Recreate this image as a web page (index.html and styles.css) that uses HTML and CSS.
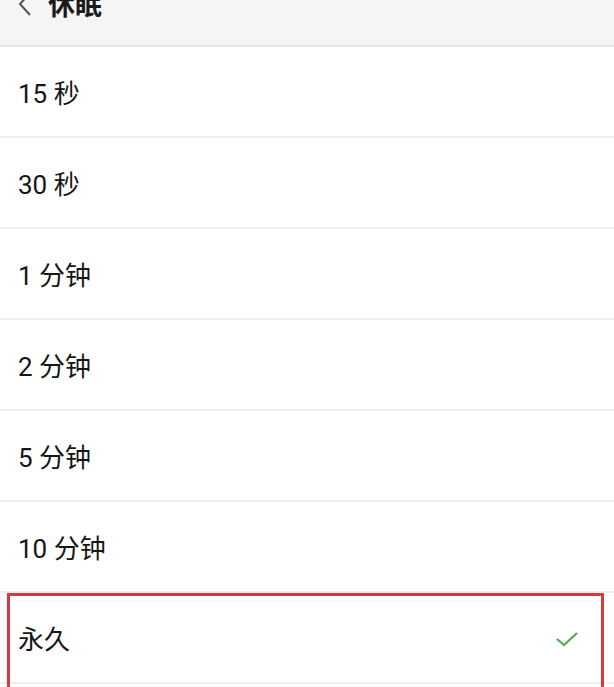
FILE: index.html
```html
<!DOCTYPE html>
<html lang="zh-CN">
<head>
    <meta charset="UTF-8">
    <meta name="viewport" content="width=device-width, initial-scale=1.0">
    <title>休眠</title>
    <link rel="stylesheet" href="styles.css">
</head>
<body>
    <div class="topbar">
        <svg class="back-icon" width="14" height="26" viewBox="0 0 14 26">
            <polyline points="12,2 2,13 12,24" fill="none" stroke="#555" stroke-width="2"/>
        </svg>
        <span class="topbar-title">休眠</span>
    </div>

    <ul class="option-list">
        <li class="option">15 秒</li>
        <li class="option">30 秒</li>
        <li class="option">1 分钟</li>
        <li class="option">2 分钟</li>
        <li class="option">5 分钟</li>
        <li class="option">10 分钟</li>
        <li class="option selected">
            永久
            <svg class="check" width="22" height="16" viewBox="0 0 22 16">
                <polyline points="1,8 8,14 21,2" fill="none" stroke="#4caf50" stroke-width="2.2"/>
            </svg>
            <div class="highlight"></div>
        </li>
        <li class="option">&nbsp;</li>
    </ul>
</body>
</html>
```

FILE: styles.css
```css
:root {
    --color-bg: #ffffff;
    --color-bar: #f5f5f5;
    --color-border: #efefef;
    --color-text: #161616;
    --color-mark: #d63a3e;
}

* {
    margin: 0;
    padding: 0;
    box-sizing: border-box;
}

html, body {
    height: 100%;
    overflow: hidden;
}

body {
    font-family: Roboto, "Noto Sans CJK SC", sans-serif;
    background: var(--color-bg);
    color: var(--color-text);
}

.topbar {
    height: 47px;
    background: var(--color-bar);
    border-bottom: 2px solid #e8e8e8;
    display: flex;
    align-items: flex-start;
    padding-left: 18px;
    gap: 16px;
    overflow: hidden;
}

.back-icon {
    margin-top: -9px;
}

.topbar-title {
    font-size: 27px;
    font-weight: 700;
    line-height: 1;
    margin-top: -7px;
    color: #1a1a1a;
}

.option-list {
    list-style: none;
}

.option {
    position: relative;
    height: 91px;
    border-bottom: 2px solid var(--color-border);
    display: flex;
    align-items: center;
    justify-content: space-between;
    padding: 0 36px 0 18px;
    font-size: 26px;
}

.check {
    margin-top: 2px;
}

.highlight {
    position: absolute;
    left: 7px;
    top: 0;
    width: 597px;
    height: 200px;
    border: 3px solid var(--color-mark);
    pointer-events: none;
}
```
